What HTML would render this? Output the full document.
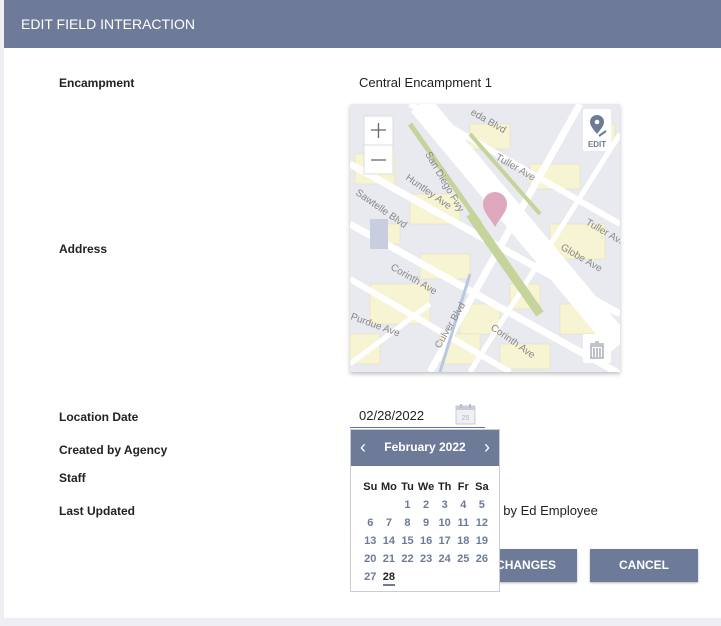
<!DOCTYPE html>
<html><head><meta charset="utf-8"><style>
body{margin:0;width:721px;height:626px;background:#eeeef3;font-family:"Liberation Sans",sans-serif;position:relative;overflow:hidden}
.card{position:absolute;left:4px;top:0;width:717px;height:618px;background:#fff}
.hdr{position:absolute;left:4px;top:0;width:717px;height:48px;background:#6e7b98;color:#fff;font-size:14px;line-height:48px;text-indent:17px}
.lb{position:absolute;left:59px;font-size:12px;font-weight:bold;color:#222}
.v{position:absolute;left:359px;font-size:13px;color:#222}
.btn{position:absolute;top:549px;height:33px;background:#6e7b98;color:#fff;font-size:12px;font-weight:bold;line-height:33px;text-align:center;box-shadow:0 1px 2px rgba(0,0,0,.3)}
.cal{position:absolute;left:350px;top:429px;width:150px;height:163px;background:#fff;border:1px solid #c9ccd6;box-sizing:border-box}
.ch{height:36px;background:#6e7b98;color:#fff;font-size:12px;font-weight:bold;text-align:center;line-height:34px;position:relative}
table{border-collapse:collapse;position:absolute;left:10px;top:48px}
td{width:18.6px;height:18px;padding:0;text-align:center;font-size:11px;color:#6e7b98;font-weight:bold}
tr.h td{color:#222}
</style></head><body>
<div class="card"></div>
<div class="hdr">EDIT FIELD INTERACTION</div>
<div class="lb" style="top:76px">Encampment</div>
<div class="v" style="top:75px">Central Encampment 1</div>
<div class="lb" style="top:242px">Address</div>
<div class="lb" style="top:410px">Location Date</div>
<div class="lb" style="top:443px">Created by Agency</div>
<div class="lb" style="top:471px">Staff</div>
<div class="lb" style="top:504px">Last Updated</div>
<div class="v" style="top:503px;left:423px">Feb 28, 2022 by Ed Employee</div>
<div class="v" style="top:408px">02/28/2022</div>
<div style="position:absolute;left:350px;top:427px;width:135px;height:1px;background:#5a6fc0"></div>
<svg style="position:absolute;left:455px;top:403px" width="21" height="22" viewBox="0 0 21 22"><rect x="1" y="3" width="19" height="18" fill="#eef0f4" stroke="#c8ccd6"/><rect x="1" y="3" width="19" height="4" fill="#c8ccd6"/><rect x="5" y="1" width="2" height="4" fill="#b8bcc8"/><rect x="14" y="1" width="2" height="4" fill="#b8bcc8"/><text x="10.5" y="17" font-size="7" text-anchor="middle" fill="#b0b4c0" font-family="Liberation Sans">25</text></svg>
<div class="btn" style="left:440px;width:137px">SAVE CHANGES</div>
<div class="btn" style="left:590px;width:108px">CANCEL</div>
<svg style="position:absolute;left:350px;top:104px;box-shadow:0 2px 4px rgba(0,0,0,.25)" width="270" height="268" viewBox="0 0 270 268">
<rect width="270" height="268" fill="#e9eaf0"/>
<g fill="#f7f4d4" stroke="#e2dcb0" stroke-width=".5">
<rect x="5" y="50" width="40" height="30"/><rect x="60" y="90" width="50" height="30"/><rect x="120" y="20" width="40" height="25"/><rect x="180" y="60" width="50" height="25"/><rect x="200" y="120" width="55" height="35"/><rect x="20" y="180" width="60" height="40"/><rect x="110" y="200" width="40" height="30"/><rect x="160" y="180" width="30" height="25"/><rect x="210" y="200" width="40" height="30"/><rect x="0" y="230" width="30" height="30"/><rect x="70" y="150" width="50" height="25"/><rect x="90" y="230" width="40" height="30"/><rect x="150" y="240" width="50" height="25"/><rect x="30" y="120" width="20" height="20"/><rect x="240" y="20" width="25" height="25"/></g>
<g stroke="#fff" fill="none" stroke-linecap="butt">
<path d="M70 0 L270 240" stroke-width="24"/>
<path d="M0 60 L270 210" stroke-width="7"/>
<path d="M0 120 L270 270" stroke-width="7"/>
<path d="M0 175 L160 268" stroke-width="6"/>
<path d="M60 0 L270 120" stroke-width="6"/>
<path d="M230 0 L80 268" stroke-width="7"/>
<path d="M270 30 L120 268" stroke-width="5"/>
<path d="M0 260 L80 200" stroke-width="5"/>
</g>
<path d="M60 20 L130 120" stroke="#c4d49a" stroke-width="5"/>
<path d="M120 110 L190 210" stroke="#c4d49a" stroke-width="9"/>
<path d="M120 30 L190 110" stroke="#c4d49a" stroke-width="4"/>
<path d="M120 170 L90 268" stroke="#b8c8e0" stroke-width="3"/>
<rect x="20" y="115" width="18" height="30" fill="#c8cedf"/>
<g font-family="Liberation Sans" font-size="10" fill="#888" >
<text x="75" y="50" transform="rotate(60 75 50)">San Diego Fwy</text>
<text x="55" y="75" transform="rotate(35 55 75)">Huntley Ave</text>
<text x="5" y="90" transform="rotate(35 5 90)">Sawtelle Blvd</text>
<text x="40" y="165" transform="rotate(30 40 165)">Corinth Ave</text>
<text x="0" y="215" transform="rotate(20 0 215)">Purdue Ave</text>
<text x="145" y="55" transform="rotate(30 145 55)">Tuller Ave</text>
<text x="235" y="120" transform="rotate(30 235 120)">Tuller Ave</text>
<text x="210" y="145" transform="rotate(30 210 145)">Globe Ave</text>
<text x="140" y="225" transform="rotate(35 140 225)">Corinth Ave</text>
<text x="90" y="245" transform="rotate(-60 90 245)">Culver Blvd</text>
<text x="120" y="10" transform="rotate(30 120 10)">eda Blvd</text>
</g>
<path d="M133 100 a12 12 0 1 1 24 0 c0 8 -7 14 -12 23 c-5 -9 -12 -15 -12 -23z" fill="#dda7bd"/>
<rect x="14" y="12" width="29" height="58" fill="#fff" stroke="#ddd"/><line x1="14" y1="41" x2="43" y2="41" stroke="#ddd"/>
<path d="M21 26h15M28.5 19v15M21 56h15" stroke="#666" stroke-width="1.3"/>
<rect x="233" y="5" width="28" height="42" rx="2" fill="#fff"/>
<path d="M247 30 c-5-6-7-9-7-12a7 7 0 0 1 14 0c0 3-2 6-7 12z" fill="#6e7b98"/><circle cx="247" cy="18" r="2.3" fill="#fff"/><path d="M249 32 l7-5" stroke="#6e7b98" stroke-width="2"/>
<text x="247" y="43" font-size="8" font-weight="bold" fill="#6e7b98" text-anchor="middle" font-family="Liberation Sans">EDIT</text>
<rect x="233" y="230" width="28" height="29" rx="2" fill="#fff"/>
<path d="M240 240h14M245 238h4M241 242h12v12h-12z M244 244v9M247 244v9M250 244v9" stroke="#9aa0ae" stroke-width="1.3" fill="none"/>
</svg>
<div class="cal">
<div class="ch"><span style="position:absolute;left:9px;font-size:18px;font-weight:normal">‹</span>February 2022<span style="position:absolute;right:9px;font-size:18px;font-weight:normal">›</span></div>
<table>
<tr class="h"><td>Su</td><td>Mo</td><td>Tu</td><td>We</td><td>Th</td><td>Fr</td><td>Sa</td></tr>
<tr><td></td><td></td><td>1</td><td>2</td><td>3</td><td>4</td><td>5</td></tr>
<tr><td>6</td><td>7</td><td>8</td><td>9</td><td>10</td><td>11</td><td>12</td></tr>
<tr><td>13</td><td>14</td><td>15</td><td>16</td><td>17</td><td>18</td><td>19</td></tr>
<tr><td>20</td><td>21</td><td>22</td><td>23</td><td>24</td><td>25</td><td>26</td></tr>
<tr><td>27</td><td style="color:#222;position:relative">28<div style="position:absolute;left:3px;right:3px;bottom:0;height:2px;background:#6e7b98"></div></td><td></td><td></td><td></td><td></td><td></td></tr>
</table>
</div>
</body></html>
